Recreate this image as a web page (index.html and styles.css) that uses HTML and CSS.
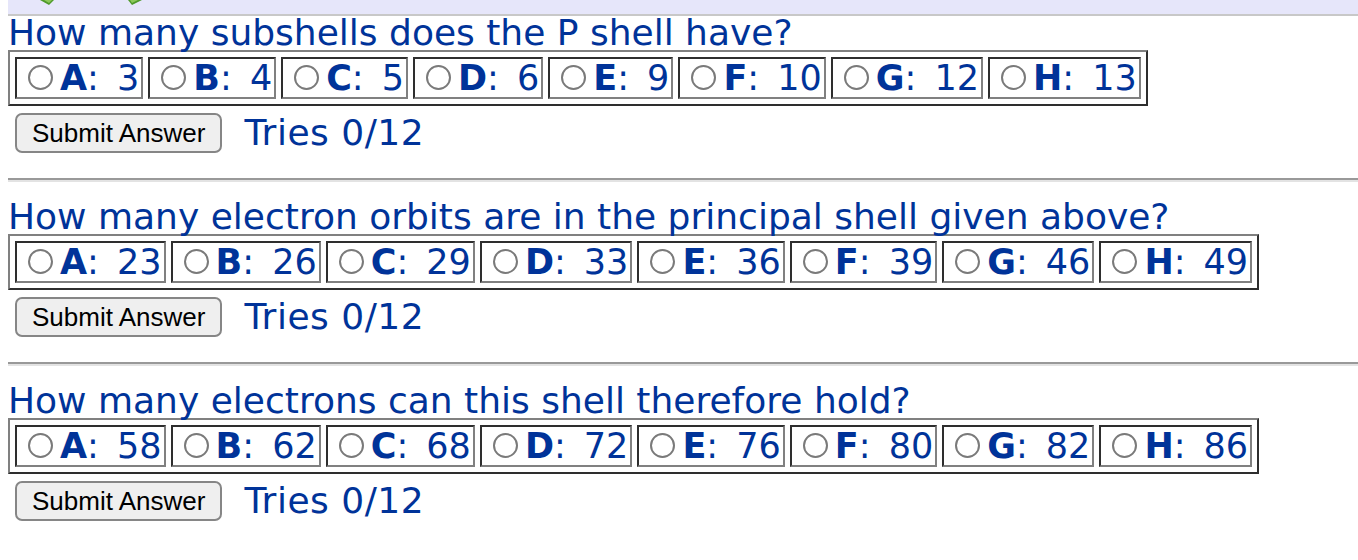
FILE: index.html
```html
<!DOCTYPE html>
<html>
<head>
<meta charset="utf-8">
<title>Quiz</title>
<link rel="stylesheet" href="styles.css">
</head>
<body>
<div class="topbar">
  <svg class="nav-arrows" width="160" height="14" viewBox="0 0 160 14">
    <polygon points="32,0 46,0 41,5" fill="#4f9a2a"/>
    <polygon points="36,0 44,0 41,3" fill="#8cc85a"/>
    <polygon points="120,0 134,0 124,5" fill="#4f9a2a"/>
    <polygon points="122,0 130,0 124,3" fill="#8cc85a"/>
  </svg>
</div>

<div class="block">
  <div class="question">How many subshells does the P shell have?</div>
  <table class="choices">
    <tr>
      <td><input type="radio" name="q1"><b>A</b>: 3</td>
      <td><input type="radio" name="q1"><b>B</b>: 4</td>
      <td><input type="radio" name="q1"><b>C</b>: 5</td>
      <td><input type="radio" name="q1"><b>D</b>: 6</td>
      <td><input type="radio" name="q1"><b>E</b>: 9</td>
      <td><input type="radio" name="q1"><b>F</b>: 10</td>
      <td><input type="radio" name="q1"><b>G</b>: 12</td>
      <td><input type="radio" name="q1"><b>H</b>: 13</td>
    </tr>
  </table>
  <div class="submit-row"><button class="submit">Submit Answer</button><span class="tries">Tries 0/12</span></div>
</div>
<hr class="sep">

<div class="block">
  <div class="question">How many electron orbits are in the principal shell given above?</div>
  <table class="choices">
    <tr>
      <td><input type="radio" name="q2"><b>A</b>: 23</td>
      <td><input type="radio" name="q2"><b>B</b>: 26</td>
      <td><input type="radio" name="q2"><b>C</b>: 29</td>
      <td><input type="radio" name="q2"><b>D</b>: 33</td>
      <td><input type="radio" name="q2"><b>E</b>: 36</td>
      <td><input type="radio" name="q2"><b>F</b>: 39</td>
      <td><input type="radio" name="q2"><b>G</b>: 46</td>
      <td><input type="radio" name="q2"><b>H</b>: 49</td>
    </tr>
  </table>
  <div class="submit-row"><button class="submit">Submit Answer</button><span class="tries">Tries 0/12</span></div>
</div>
<hr class="sep">

<div class="block">
  <div class="question">How many electrons can this shell therefore hold?</div>
  <table class="choices">
    <tr>
      <td><input type="radio" name="q3"><b>A</b>: 58</td>
      <td><input type="radio" name="q3"><b>B</b>: 62</td>
      <td><input type="radio" name="q3"><b>C</b>: 68</td>
      <td><input type="radio" name="q3"><b>D</b>: 72</td>
      <td><input type="radio" name="q3"><b>E</b>: 76</td>
      <td><input type="radio" name="q3"><b>F</b>: 80</td>
      <td><input type="radio" name="q3"><b>G</b>: 82</td>
      <td><input type="radio" name="q3"><b>H</b>: 86</td>
    </tr>
  </table>
  <div class="submit-row"><button class="submit">Submit Answer</button><span class="tries">Tries 0/12</span></div>
</div>
</body>
</html>
```

FILE: styles.css
```css
html, body {
  background: #ffffff;
}
body {
  margin: 0 0 0 8px;
  font-family: "DejaVu Sans", Verdana, sans-serif;
  color: #003399;
  overflow: hidden;
}
.topbar {
  height: 14px;
  background: #e6e6fa;
  border-bottom: 2px solid #c8c8c8;
  overflow: hidden;
}
.nav-arrows {
  display: block;
}
.question {
  font-size: 36px;
  line-height: 34px;
  white-space: nowrap;
}
.choices {
  border-collapse: separate;
  border-spacing: 5px;
  border-style: solid;
  border-width: 2px;
  border-color: #808080 #2e2e2e #2e2e2e #808080;
}
.choices td {
  border-style: solid;
  border-width: 2px;
  border-color: #2e2e2e #808080 #808080 #2e2e2e;
  padding: 0 2px;
  height: 38px;
  line-height: 38px;
  font-size: 35px;
  white-space: nowrap;
  word-spacing: 7px;
  color: #003399;
}
.choices td input {
  appearance: none;
  -webkit-appearance: none;
  box-sizing: border-box;
  width: 25px;
  height: 25px;
  border: 2px solid #7a7a7a;
  border-radius: 50%;
  background: #ffffff;
  margin: 6px 7px 0 9px;
  padding: 0;
  vertical-align: top;
}
.submit-row {
  display: flex;
  align-items: center;
  gap: 22px;
  margin: 7px 0 0 7px;
  height: 40px;
}
.submit {
  box-sizing: border-box;
  height: 40px;
  padding: 0 15px;
  margin: 0;
  border: 2px solid #868686;
  border-radius: 7px;
  background: #efefef;
  color: #000000;
  font-family: "Liberation Sans", Arial, sans-serif;
  font-size: 26px;
  line-height: 36px;
}
.tries {
  font-size: 36px;
  line-height: 40px;
  letter-spacing: 0.5px;
  white-space: nowrap;
}
.sep {
  height: 0;
  margin: 25px 0 18px 0;
  border: 0;
  border-top: 2px solid #999999;
  border-bottom: 2px solid #e3e3e3;
}
```
